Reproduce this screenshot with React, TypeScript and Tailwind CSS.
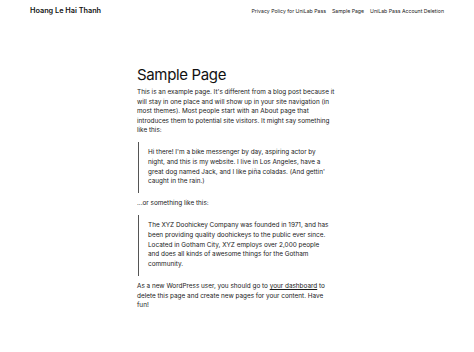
import React from "react";

const font = { fontFamily: "Inter, 'Noto Sans', sans-serif" };

const navLinks = [
  "Privacy Policy for UniLab Pass",
  "Sample Page",
  "UniLab Pass Account Deletion",
];

export default function App() {
  return (
    <div
      className="w-[474px] h-[352px] bg-white text-[#111111] overflow-hidden"
      style={font}
    >
      <header className="flex items-center justify-between px-[30px] pt-[6px]">
        <a className="text-[7.3px] leading-[10px] font-semibold">
          Hoang Le Hai Thanh
        </a>
        <nav className="flex gap-[6px] text-[5.2px] leading-[10px] text-[#222]">
          {navLinks.map((link) => (
            <a key={link}>{link}</a>
          ))}
        </nav>
      </header>

      <main className="w-[198px] mt-[50px] ml-[137px]">
        <h1 className="text-[15px] leading-[18px] tracking-[-0.35px] mb-[4px]">
          Sample Page
        </h1>
        <div className="flex flex-col gap-[6px] text-[6.4px] leading-[9.6px] text-[#1a1a1a]">
          <p>
            This is an example page. It's different from a blog post because it
            will stay in one place and will show up in your site navigation (in
            most themes). Most people start with an About page that introduces
            them to potential site visitors. It might say something like this:
          </p>
          <blockquote className="border-l border-[#555] pl-[9px] pr-[3px] py-[6.5px] ml-[1px]">
            <p>
              Hi there! I'm a bike messenger by day, aspiring actor by night,
              and this is my website. I live in Los Angeles, have a great dog
              named Jack, and I like piña coladas. (And gettin' caught in the
              rain.)
            </p>
          </blockquote>
          <p>...or something like this:</p>
          <blockquote className="border-l border-[#555] pl-[9px] pr-[3px] py-[6.5px] ml-[1px]">
            <p>
              The XYZ Doohickey Company was founded in 1971, and has been
              providing quality doohickeys to the public ever since. Located in
              Gotham City, XYZ employs over 2,000 people and does all kinds of
              awesome things for the Gotham community.
            </p>
          </blockquote>
          <p>
            As a new WordPress user, you should go to{" "}
            <a className="underline">your dashboard</a> to delete this page and
            create new pages for your content. Have fun!
          </p>
        </div>
      </main>
    </div>
  );
}
